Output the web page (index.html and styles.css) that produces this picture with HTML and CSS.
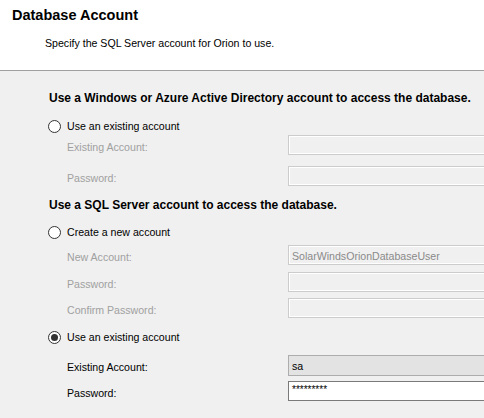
FILE: index.html
```html
<!DOCTYPE html>
<html>
<head>
<meta charset="utf-8">
<link rel="stylesheet" href="styles.css">
</head>
<body>
<div class="header">
  <div class="title">Database Account</div>
  <div class="subtitle">Specify the SQL Server account for Orion to use.</div>
</div>
<div class="content">
  <div class="section s1">Use a Windows or Azure Active Directory account to access the database.</div>
  <div class="radio-row r1"><span class="radio"></span><span>Use an existing account</span></div>
  <div class="field f1 disabled"><span class="label">Existing Account:</span><span class="box"></span></div>
  <div class="field f2 disabled"><span class="label">Password:</span><span class="box"></span></div>

  <div class="section s2">Use a SQL Server account to access the database.</div>
  <div class="radio-row r2"><span class="radio"></span><span>Create a new account</span></div>
  <div class="field f3 disabled"><span class="label">New Account:</span><span class="box">SolarWindsOrionDatabaseUser</span></div>
  <div class="field f4 disabled"><span class="label">Password:</span><span class="box"></span></div>
  <div class="field f5 disabled"><span class="label">Confirm Password:</span><span class="box"></span></div>

  <div class="radio-row r3"><span class="radio checked"></span><span>Use an existing account</span></div>
  <div class="field f6"><span class="label">Existing Account:</span><span class="box readonly">sa</span></div>
  <div class="field f7"><span class="label">Password:</span><span class="box active">*********</span></div>
</div>
</body>
</html>
```

FILE: styles.css
```css
html, body {
  margin: 0;
  padding: 0;
}
body {
  width: 484px;
  height: 418px;
  overflow: hidden;
  background: #f0f0f0;
  font-family: "Liberation Sans", Arial, sans-serif;
  font-size: 10.6px;
  color: #000;
}
.header {
  height: 70px;
  background: #fff;
  border-bottom: 1px solid #a0a0a0;
  box-sizing: content-box;
}
.title {
  padding: 6px 0 0 12px;
  font-weight: bold;
  font-size: 14.5px;
  line-height: 18px;
}
.subtitle {
  padding: 12px 0 0 45px;
  line-height: 14px;
}
.content {
  padding-left: 48px;
}
.section {
  font-weight: bold;
  font-size: 12px;
  line-height: 16px;
  padding-left: 1px;
}
.s1 { margin-top: 19px; }
.s2 { margin-top: 11px; }
.radio-row {
  display: flex;
  align-items: center;
  gap: 6px;
  height: 16px;
}
.r1 { margin-top: 12px; }
.r2 { margin-top: 11px; }
.r3 { margin-top: 11px; }
.radio {
  width: 11px;
  height: 11px;
  border: 1px solid #333;
  border-radius: 50%;
  background: #fff;
  display: flex;
  align-items: center;
  justify-content: center;
  flex: none;
}
.radio.checked::after {
  content: "";
  width: 7px;
  height: 7px;
  border-radius: 50%;
  background: #333;
}
.field {
  display: grid;
  grid-template-columns: 221px 220px;
  margin-left: 19px;
  height: 20px;
}
.label {
  line-height: 14px;
  padding-top: 5px;
}
.disabled .label { color: #a0a0a0; }
.box {
  box-sizing: border-box;
  height: 20px;
  border: 1px solid #cccccc;
  box-shadow: inset 0 0 0 1px #ffffff;
  background: #f0f0f0;
  color: #8a8a8a;
  padding: 3px 0 0 3px;
  line-height: 14px;
  white-space: nowrap;
}
.box.readonly {
  height: 21px;
  background: #e3e3e3;
  border-color: #adadad;
  box-shadow: none;
  color: #000;
  padding-top: 3px;
}
.box.active {
  background: #fff;
  border-color: #7a7a7a;
  box-shadow: none;
  color: #000;
  padding-top: 1px;
  font-size: 10px;
}
.f1 { margin-top: 1px; }
.f2 { margin-top: 11px; }
.f3 { margin-top: 5px; }
.f4 { margin-top: 7px; }
.f5 { margin-top: 6px; }
.f6 { margin-top: 10px; }
.f7 { margin-top: 6px; }
```
